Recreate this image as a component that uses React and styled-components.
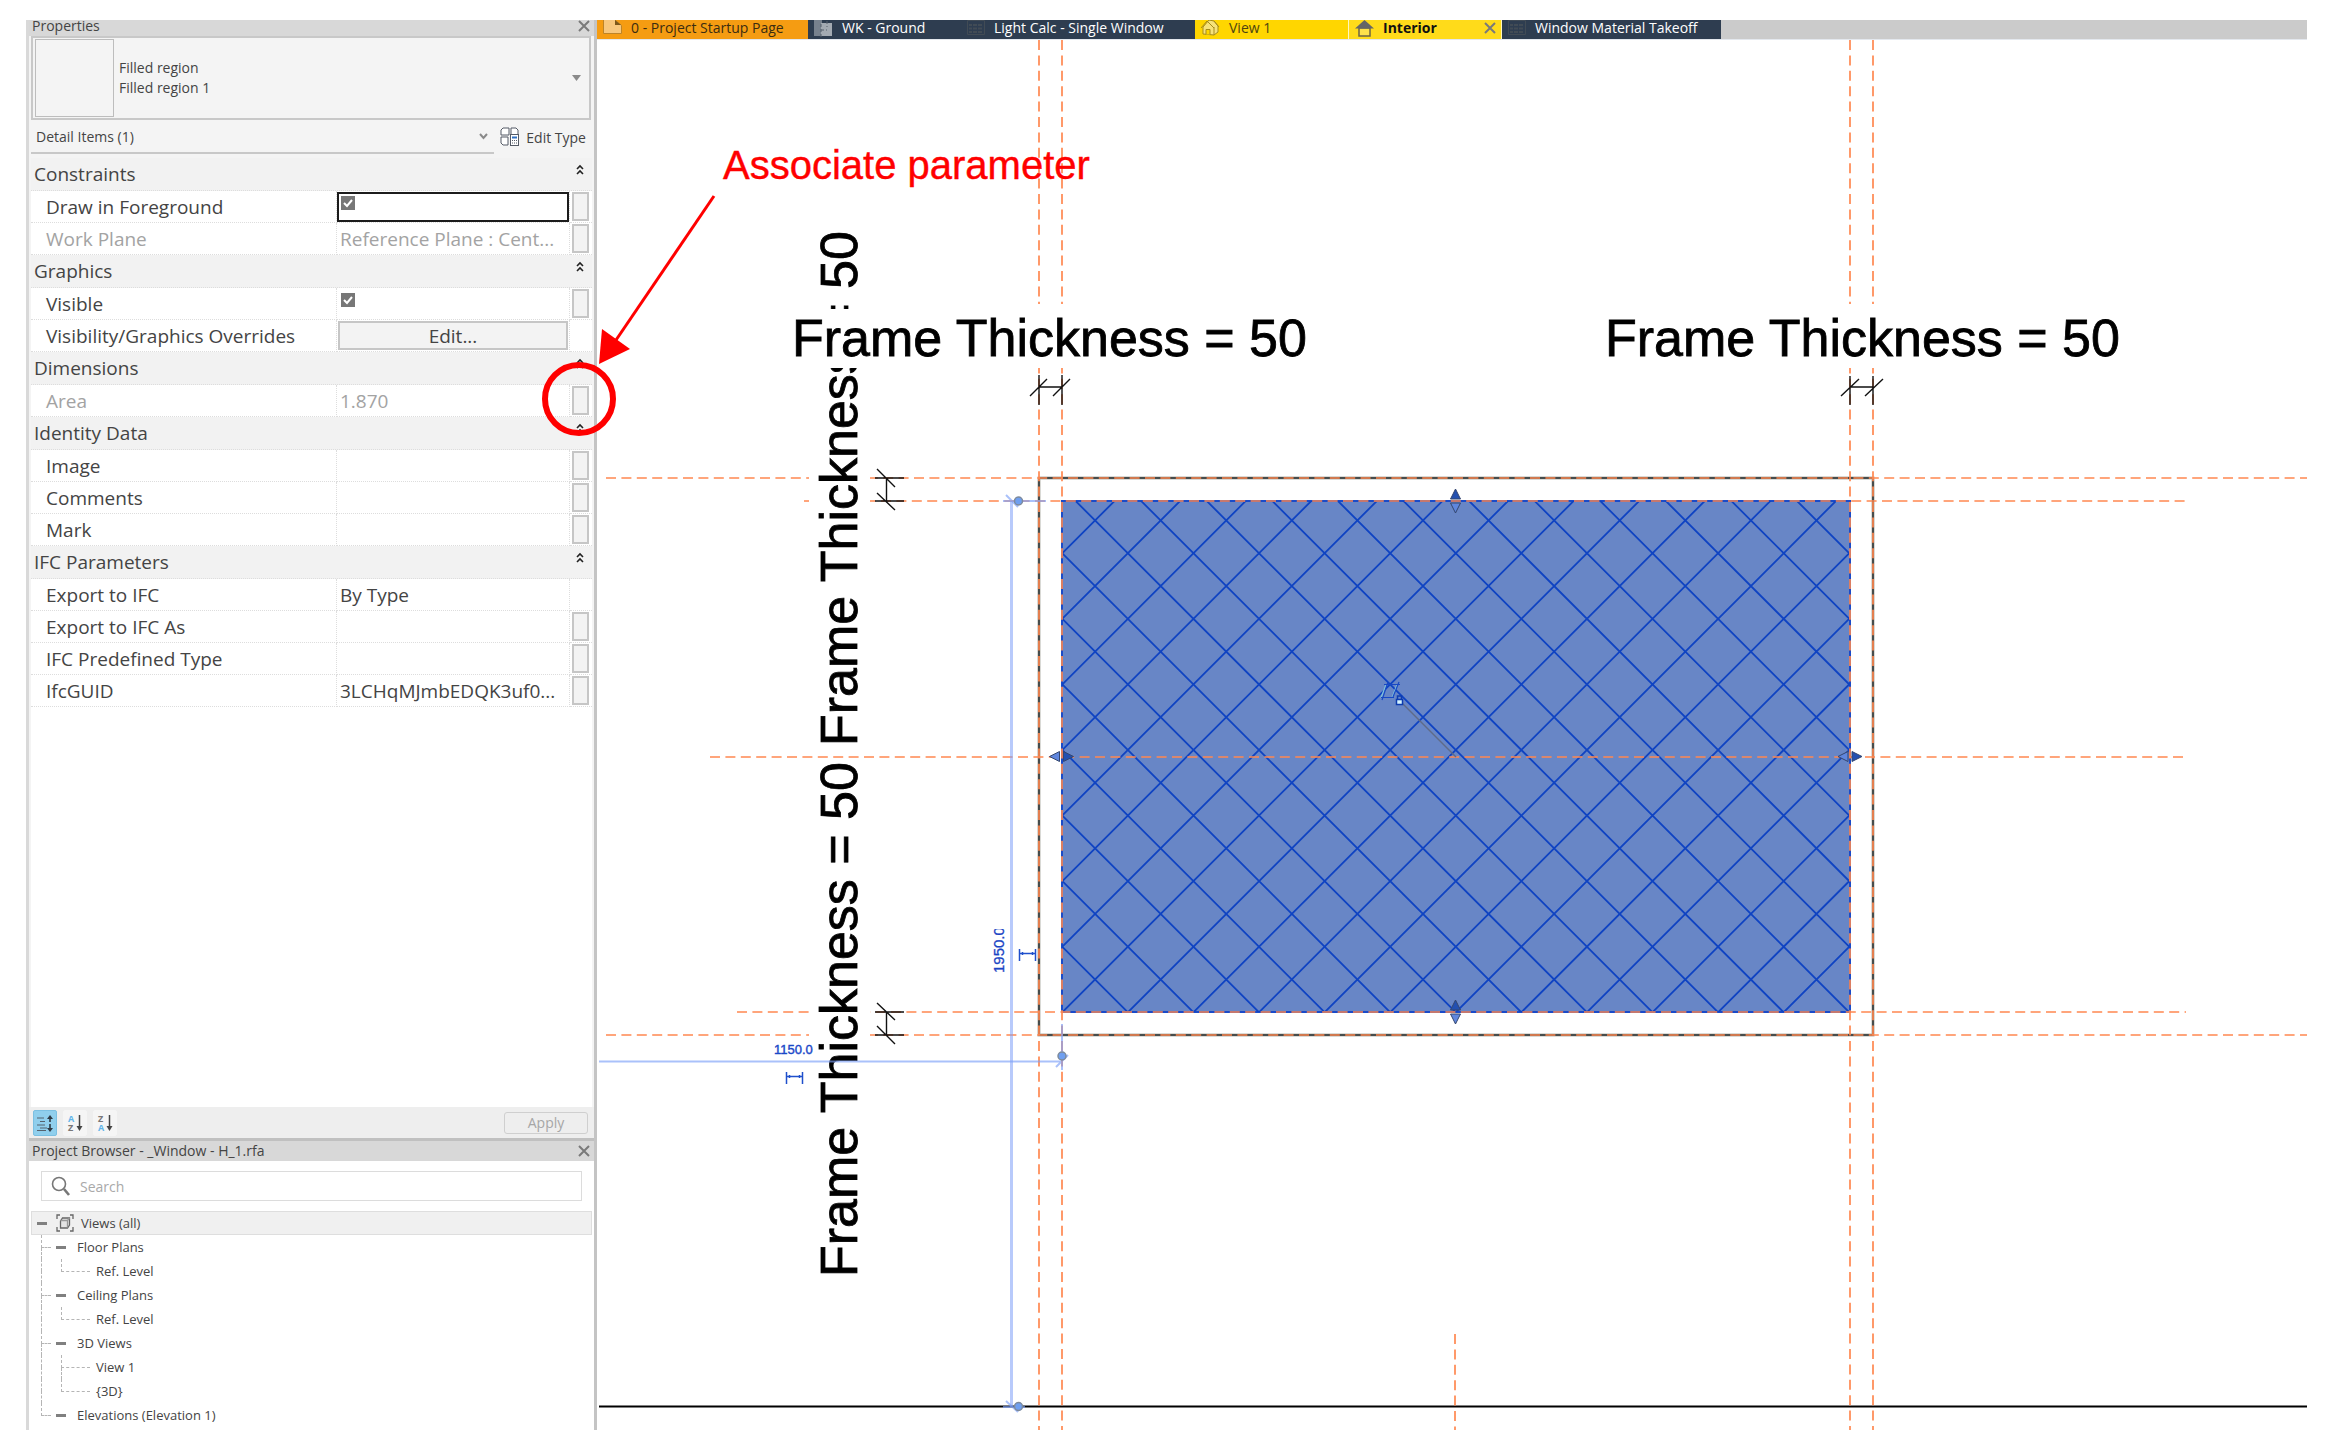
import React from "react";
import styled, { createGlobalStyle, css } from "styled-components";

const GlobalStyle = createGlobalStyle`
  *, *::before, *::after {
    box-sizing: border-box;
  }
  body {
    margin: 0;
    background: #ffffff;
    color: #444444;
    font-family: "Open Sans", "Noto Sans", sans-serif;
    font-size: 14px;
  }
  button, input, select {
    font-family: inherit;
    color: inherit;
  }
  button {
    cursor: pointer;
  }
`;

const Page = styled.div`
  position: relative;
  display: flex;
  min-height: 100vh;
  padding: 20px 40px 22px 26px;
`;

const Sidebar = styled.aside`
  flex: 0 0 571px;
  display: flex;
  flex-direction: column;
  border-left: 3px solid #d9d9d9;
  border-right: 3px solid #c4c4c4;
  background: #f4f4f4;
`;

const PanelTitle = styled.h2`
  display: flex;
  align-items: ${(props) => (props.$short ? "flex-start" : "center")};
  justify-content: space-between;
  height: ${(props) => (props.$short ? "16px" : "20px")};
  margin: 0;
  padding: 0 4px 0 3px;
  background: #d8d8d8;
  font-size: 14px;
  font-weight: 400;
  line-height: 12px;
`;

const CloseButton = styled.button`
  display: flex;
  padding: 0;
  border: 0;
  background: none;
`;

const TypeSelector = styled.button`
  display: flex;
  align-items: center;
  gap: 5px;
  height: 84px;
  margin: 0 3px 0 2px;
  padding: 1px 8px 1px 2px;
  border: 2px solid #c8c8c8;
  background: #f4f4f4;
  font-size: 14px;
  line-height: 20px;
  text-align: left;

  svg {
    margin-left: auto;
  }
`;

const Thumb = styled.span`
  width: 79px;
  height: 78px;
  border: 1px solid #bdbdbd;
`;

const FilterRow = styled.div`
  display: flex;
  align-items: flex-start;
  gap: 6px;
  height: 38px;
  padding: 0 8px 0 2px;
`;

const FilterBox = styled.div`
  display: flex;
  align-items: center;
  flex: 1;
  height: 34px;
  padding-right: 6px;
  border-bottom: 2px solid #c8c8c8;
`;

const FilterSelect = styled.select`
  flex: 1;
  appearance: none;
  padding: 0 5px;
  border: 0;
  background: none;
  font-size: 14px;
`;

const EditType = styled.button`
  display: flex;
  align-items: center;
  gap: 6px;
  height: 34px;
  padding: 0;
  border: 0;
  background: none;
  font-size: 14px;
`;

const GridArea = styled.div`
  flex: 1;
  margin: 0 2px;
  background: #ffffff;
`;

const PropertyTable = styled.table`
  width: 100%;
  table-layout: fixed;
  border-collapse: separate;
  border-spacing: 0;
  font-size: 19px;
  line-height: 24px;

  th, td {
    height: 32px;
    padding: 0;
    overflow: hidden;
    border-bottom: 1px dotted #dddddd;
    font-weight: 400;
    text-align: left;
    white-space: nowrap;
  }
`;

const LabelCol = styled.col`
  width: 306px;
`;

const ButtonCol = styled.col`
  width: 22px;
`;

const GroupCell = styled.th`
  && {
    height: 33px;
    background: #f2f2f2;
  }
`;

const GroupHead = styled.div`
  display: flex;
  align-items: center;
  justify-content: space-between;
  padding: 0 8px 0 3px;

  button {
    padding: 0 0 10px;
    border: 0;
    background: none;
    display: flex;
  }
`;

const LabelCell = styled.th`
  && {
    padding-left: 15px;
    border-right: 1px dotted #dddddd;
    color: ${(props) => (props.$muted ? "#a3a3a3" : "#444444")};
  }
`;

const ValueCell = styled.td`
  && {
    border-right: 1px dotted #dddddd;
    color: ${(props) => (props.$muted ? "#a3a3a3" : "#444444")};
  }
`;

const Value = styled.div`
  display: flex;
  align-items: center;
  height: 30px;
  padding: 0 3px;
  ${(props) =>
    props.$focused &&
    css`
      padding: 0 1px;
      border: 2px solid #1c1c1c;
    `}
`;

const Check = styled.input`
  appearance: none;
  width: 14px;
  height: 14px;
  margin: 0 0 8px 1px;
  background: #777777
    url("data:image/svg+xml,%3Csvg xmlns='http://www.w3.org/2000/svg' viewBox='0 0 14 14'%3E%3Cpath d='M3 7l3 3 5-6' fill='none' stroke='white' stroke-width='2'/%3E%3C/svg%3E");
`;

const EditButton = styled.button`
  width: 100%;
  height: 29px;
  margin: 0 -2px;
  flex: 1 0 auto;
  border: 2px solid #c6c6c6;
  background: #f3f3f3;
  font-size: 19px;
  line-height: 24px;
`;

const AssociateButton = styled.button`
  display: block;
  width: 17px;
  height: 29px;
  margin-left: 2px;
  padding: 0;
  border: 2px solid #c6c6c6;
  background: #f3f3f3;
`;

const SortBar = styled.div`
  display: flex;
  align-items: center;
  gap: 6px;
  height: 31px;
  padding: 0 6px 0 4px;
  background: #eeeeee;
`;

const SortButton = styled.button`
  display: flex;
  align-items: center;
  justify-content: center;
  width: 24px;
  height: 26px;
  padding: 0;
  border: 1px solid ${(props) => (props.$active ? "#7cc0e2" : "#f5f5f5")};
  border-radius: 2px;
  background: ${(props) => (props.$active ? "#90cfed" : "#f5f5f5")};
`;

const ApplyButton = styled.button`
  width: 84px;
  height: 22px;
  margin-left: auto;
  padding: 0;
  border: 1px solid #cfcfcf;
  border-radius: 3px;
  background: #eeeeee;
  color: #a6a6a6;
  font-size: 14px;
  line-height: 18px;
`;

const Divider = styled.div`
  height: 3px;
  background: #c0c0c0;
`;

const Browser = styled.section`
  background: #ffffff;
`;

const SearchBox = styled.label`
  display: flex;
  align-items: center;
  gap: 10px;
  height: 30px;
  margin: 10px 12px 10px 12px;
  padding: 0 9px;
  border: 1px solid #dcdcdc;
`;

const SearchInput = styled.input`
  flex: 1;
  padding: 0;
  border: 0;
  outline: 0;
  font-size: 14px;

  &::placeholder {
    color: #a9a9a9;
    opacity: 1;
  }
`;

const Tree = styled.ul`
  margin: 0 2px;
  padding: 0 0 3px;
  list-style: none;
  font-size: 13px;
  line-height: 18px;
`;

const TreeRow = styled.li`
  display: flex;
  align-items: center;
  height: 24px;
  padding-left: ${(props) => (props.$root ? "0" : "10px")};
  ${(props) =>
    props.$root &&
    css`
      gap: 7px;
      border: 1px solid #dedede;
      background: #f0f0f0;
    `}
`;

const Rail = styled.span`
  display: flex;
  flex-direction: column;
  width: ${(props) => props.$width}px;
  height: 24px;

  &::before, &::after {
    content: "";
    flex: 1;
    border-left: 1px dashed #b5b5b5;
  }
  &::before {
    border-bottom: ${(props) => (props.$branch ? "1px dashed #b5b5b5" : "0")};
  }
  &::after {
    border-left-color: ${(props) => (props.$last ? "transparent" : "#b5b5b5")};
  }
`;

const Toggle = styled.button`
  width: 10px;
  height: 3px;
  margin: 0 ${(props) => (props.$root ? "2px" : "11px")} 0 5px;
  padding: 0;
  border: 0;
  background: #808080;
`;

const LeafText = styled.span`
  padding-left: 6px;
`;

const Workspace = styled.main`
  flex: 1;
  min-width: 0;
  background: #ffffff;
`;

const TabBar = styled.nav`
  display: flex;
  height: 20px;
  background: #cbcbcb;
  border-bottom: 1px solid #e4e8ee;
`;

const tabColors = {
  orange: ["#f59c12", "#3c2c10"],
  navy: ["#2e3d50", "#ffffff"],
  gold: ["#ffd600", "#4d4410"],
  yellow: ["#ffdb1a", "#111111"],
};

const Tab = styled.div`
  display: flex;
  align-items: flex-start;
  flex: 0 1 ${(props) => props.$width}px;
  gap: 9px;
  padding: 0 5px 0 6px;
  background: ${(props) => tabColors[props.$tone][0]};
  border-right: ${(props) => (props.$edge ? "1px solid #fff6c0" : "0")};

  a {
    flex: 1;
    color: ${(props) => tabColors[props.$tone][1]};
    font-size: 14px;
    font-weight: ${(props) => (props.$active ? 700 : 400)};
    line-height: 16px;
    text-decoration: none;
    white-space: nowrap;
  }
  svg {
    flex: none;
  }
  button {
    padding-top: 2px;
  }
`;

const Drawing = styled.svg`
  display: block;
  width: 100%;
  height: auto;
  font-family: "Liberation Sans", Arial, sans-serif;
`;

const Markup = styled.svg`
  position: absolute;
  left: 526px;
  top: 140px;
  width: 590px;
  height: 310px;
  pointer-events: none;
  font-family: "Liberation Sans", Arial, sans-serif;
`;

const groups = [
  {
    name: "Constraints",
    rows: [
      { label: "Draw in Foreground", check: true, focused: true, link: true },
      { label: "Work Plane", value: "Reference Plane : Cent...", muted: true, link: true },
    ],
  },
  {
    name: "Graphics",
    rows: [
      { label: "Visible", check: true, link: true },
      { label: "Visibility/Graphics Overrides", edit: true },
    ],
  },
  {
    name: "Dimensions",
    rows: [{ label: "Area", value: "1.870", muted: true, link: true }],
  },
  {
    name: "Identity Data",
    rows: [
      { label: "Image", link: true },
      { label: "Comments", link: true },
      { label: "Mark", link: true },
    ],
  },
  {
    name: "IFC Parameters",
    rows: [
      { label: "Export to IFC", value: "By Type" },
      { label: "Export to IFC As", link: true },
      { label: "IFC Predefined Type", link: true },
      { label: "IfcGUID", value: "3LCHqMJmbEDQK3uf0...", link: true },
    ],
  },
];

const tree = [
  { name: "Floor Plans", views: ["Ref. Level"] },
  { name: "Ceiling Plans", views: ["Ref. Level"] },
  { name: "3D Views", views: ["View 1", "{3D}"] },
  { name: "Elevations (Elevation 1)", views: [] },
];

const tabs = [
  { name: "0 - Project Startup Page", tone: "orange", icon: "sheet", width: 211 },
  { name: "WK - Ground", tone: "navy", icon: "plan", width: 153 },
  { name: "Light Calc - Single Window", tone: "navy", icon: "table", width: 234 },
  { name: "View 1", tone: "gold", icon: "house", width: 154, edge: true },
  { name: "Interior", tone: "yellow", icon: "elevation", width: 153, active: true, edge: true },
  { name: "Window Material Takeoff", tone: "navy", icon: "table", width: 219 },
];

const CloseIcon = ({ size = 12 }) => (
  <svg width={size} height={size} viewBox="0 0 12 12">
    <path d="M1 1l10 10M11 1L1 11" stroke="#7a7a7a" strokeWidth="2" />
  </svg>
);

const CollapseIcon = () => (
  <svg width="8" height="11" viewBox="0 0 8 11">
    <path d="M1 5l3-3 3 3M1 10l3-3 3 3" fill="none" stroke="#222" strokeWidth="1.6" />
  </svg>
);

const EditTypeIcon = () => (
  <svg width="20" height="20" viewBox="0 0 20 20" fill="#fff" stroke="#555b66">
    <path d="M3 1h6v7H1V3zM11 1h5l2 2v5h-7zM1 10h7v8H3l-2-2z" />
    <rect x="10.5" y="7.5" width="8" height="11" />
    <path d="M12 10.5h5" stroke="#2f6fc0" strokeWidth="2" />
    <path d="M12 13.500h1m1 0h1m1 0h1M12 16h1m1 0h1m1 0h1" />
  </svg>
);

const SearchIcon = () => (
  <svg width="19" height="20" viewBox="0 0 19 20" fill="none" stroke="#777">
    <circle cx="8" cy="8" r="6.5" strokeWidth="1.6" />
    <path d="M13 13l5 6" strokeWidth="2.6" />
  </svg>
);

const ViewsIcon = () => (
  <svg width="18" height="18" viewBox="0 0 18 18" fill="none" stroke="#666" strokeWidth="1.3">
    <path d="M4 1H1v4M14 1h3v4M4 17H1v-4M14 17h3v-4" />
    <path d="M4.500 7l2-3h7v7l-2 3h-7z" fill="#e4e4e4" />
    <path d="M4.500 6.500h7v7M11.500 6.500l2-2.500" stroke="#999" />
  </svg>
);

const GroupSortIcon = () => (
  <svg width="16" height="18" viewBox="0 0 16 18">
    <path d="M0 4h7M3 7.500h5M0 11h8M3 14h7M0 16.500h9" stroke="#55626e" />
    <path d="M13 3v5M13 10v5" stroke="#2f3a44" strokeWidth="1.6" />
    <path d="M13 1l-3 4h6zM13 18l-3-4h6z" fill="#2f3a44" />
  </svg>
);

const AlphaSortIcon = ({ top, bottom }) => (
  <svg width="16" height="24" viewBox="0 0 16 24">
    <text x="1" y="11" fontSize="9" fontWeight="700" fill={top === "A" ? "#62b5ea" : "#777"}>
      {top}
    </text>
    <text x="1" y="20" fontSize="9" fontWeight="700" fill={bottom === "A" ? "#62b5ea" : "#777"}>
      {bottom}
    </text>
    <path d="M12.500 4v12" stroke="#444" strokeWidth="1.5" />
    <path d="M12.500 20l-3-5h6z" fill="#444" />
  </svg>
);

const TabIcon = ({ kind }) => {
  if (kind === "sheet") {
    return (
      <svg width="19" height="16" viewBox="0 2 19 16">
        <path d="M.5 1.500h11l7 6v8H.5z" fill="#f7c77d" stroke="#bd8428" />
        <path d="M12 2v5h6z" fill="#7c5718" />
      </svg>
    );
  }
  if (kind === "plan") {
    return (
      <svg width="19" height="18" viewBox="0 0 19 18">
        <path d="M0 0h8v16H0z" fill="#77818d" />
        <path d="M7 3h11v13H7z" fill="#a3aab2" />
        <path d="M7 4v13M13 1v6M7 10h6" stroke="#56606c" strokeDasharray="3 2" />
      </svg>
    );
  }
  if (kind === "table") {
    return (
      <svg width="18" height="16" viewBox="0 0 18 16" fill="none" stroke="#414b55">
        <path d="M.5 .5h17v14H.5z" />
        <path d="M2 5h3m1 0h4m1 0h4M2 8.500h3m1 0h4m1 0h4M2 12h3m1 0h4m1 0h4" strokeWidth="2" />
      </svg>
    );
  }
  if (kind === "house") {
    return (
      <svg width="19" height="18" viewBox="0 1 19 18" fill="#f6e27a" stroke="#a58c1c">
        <path d="M2 8v7l11 1 4-3V7l-4-5-5-1z" />
        <path d="M0 9l6-7 7 7M13 8v8M13 2l5 6" fill="none" />
        <path d="M5 15.500v-5h4v5" fill="#ffd600" />
      </svg>
    );
  }
  return (
    <svg width="19" height="18" viewBox="0 0 19 18">
      <path d="M4 8h11v8H4z" fill="#ffe24a" stroke="#6d6644" strokeWidth="1.5" />
      <path d="M9.500 0L19 8.500H0z" fill="#666" />
    </svg>
  );
};

const PropertyRow = ({ row }) => (
  <tr>
    <LabelCell scope="row" $muted={row.muted}>
      {row.label}
    </LabelCell>
    <ValueCell $muted={row.muted}>
      <Value $focused={row.focused}>
        {row.check && <Check type="checkbox" defaultChecked aria-label={row.label} />}
        {row.edit && <EditButton type="button">Edit...</EditButton>}
        {row.value}
      </Value>
    </ValueCell>
    <td>{row.link && <AssociateButton type="button" aria-label="Associate family parameter" />}</td>
  </tr>
);

const Properties = () => (
  <>
    <PanelTitle $short>
      Properties
      <CloseButton type="button" aria-label="Close">
        <CloseIcon />
      </CloseButton>
    </PanelTitle>
    <TypeSelector type="button">
      <Thumb />
      <span>
        Filled region
        <br />
        Filled region 1
      </span>
      <svg width="9" height="6" viewBox="0 0 9 6">
        <path d="M0 0h9L4.500 6z" fill="#8a8a8a" />
      </svg>
    </TypeSelector>
    <FilterRow>
      <FilterBox>
        <FilterSelect aria-label="Selection filter">
          <option>Detail Items (1)</option>
        </FilterSelect>
        <svg width="9" height="7" viewBox="0 0 9 7">
          <path d="M1 1l3.500 4L8 1" fill="none" stroke="#8a8a8a" strokeWidth="2" />
        </svg>
      </FilterBox>
      <EditType type="button">
        <EditTypeIcon />
        Edit Type
      </EditType>
    </FilterRow>
    <GridArea>
      <PropertyTable>
        <colgroup>
          <LabelCol />
          <col />
          <ButtonCol />
        </colgroup>
        {groups.map((group) => (
          <tbody key={group.name}>
            <tr>
              <GroupCell colSpan={3} scope="rowgroup">
                <GroupHead>
                  {group.name}
                  <button type="button" aria-label={`Collapse ${group.name}`}>
                    <CollapseIcon />
                  </button>
                </GroupHead>
              </GroupCell>
            </tr>
            {group.rows.map((row) => (
              <PropertyRow key={row.label} row={row} />
            ))}
          </tbody>
        ))}
      </PropertyTable>
    </GridArea>
    <SortBar>
      <SortButton type="button" $active aria-label="Sort by group">
        <GroupSortIcon />
      </SortButton>
      <SortButton type="button" aria-label="Sort ascending">
        <AlphaSortIcon top="A" bottom="Z" />
      </SortButton>
      <SortButton type="button" aria-label="Sort descending">
        <AlphaSortIcon top="Z" bottom="A" />
      </SortButton>
      <ApplyButton type="button">Apply</ApplyButton>
    </SortBar>
  </>
);

const ProjectBrowser = () => (
  <Browser>
    <PanelTitle>
      Project Browser - _Window - H_1.rfa
      <CloseButton type="button" aria-label="Close">
        <CloseIcon />
      </CloseButton>
    </PanelTitle>
    <SearchBox>
      <SearchIcon />
      <SearchInput type="text" placeholder="Search" aria-label="Search" />
    </SearchBox>
    <Tree>
      <TreeRow $root>
        <Toggle type="button" $root aria-label="Collapse Views" />
        <ViewsIcon />
        Views (all)
      </TreeRow>
      {tree.map((folder, i) => (
        <React.Fragment key={folder.name}>
          <TreeRow>
            <Rail $width={10} $branch $last={i === tree.length - 1} />
            <Toggle type="button" aria-label={`Collapse ${folder.name}`} />
            {folder.name}
          </TreeRow>
          {folder.views.map((view, j) => (
            <TreeRow key={view}>
              <Rail $width={20} />
              <Rail $width={29} $branch $last={j === folder.views.length - 1} />
              <LeafText>{view}</LeafText>
            </TreeRow>
          ))}
        </React.Fragment>
      ))}
    </Tree>
  </Browser>
);

const Tabs = () => (
  <TabBar>
    {tabs.map((tab) => (
      <Tab key={tab.name} $tone={tab.tone} $width={tab.width} $active={tab.active} $edge={tab.edge}>
        <TabIcon kind={tab.icon} />
        <a href="#view">{tab.name}</a>
        {tab.active && (
          <CloseButton type="button" aria-label="Close tab">
            <CloseIcon />
          </CloseButton>
        )}
      </Tab>
    ))}
  </TabBar>
);

// model geometry, in view units
const outer = { x1: 1039, x2: 1873, y1: 478, y2: 1035 };
const inner = { x1: 1062, x2: 1850, y1: 501, y2: 1012 };
const STEP = 65.58;

const hatch = [];
for (let i = -14; i <= 14; i++) {
  const cx = 1357.4 + i * STEP;
  hatch.push(`M${cx - 500} 151.6l1000 1000M${cx + 500} 151.6l-1000 1000`);
}

// each entry is x1, y1, x2, y2
const referencePlanes = [
  [1039, 40, 1039, 1430],
  [1062, 40, 1062, 1430],
  [1850, 40, 1850, 1430],
  [1873, 40, 1873, 1430],
  [606, 478, 2307, 478],
  [804, 501, 2186, 501],
  [710, 757, 2186, 757],
  [737, 1012, 2186, 1012],
  [606, 1035, 2307, 1035],
  [1455, 1334, 1455, 1430],
];

const Grip = ({ x, y, rotate = 0 }) => (
  <g transform={`translate(${x} ${y}) rotate(${rotate})`} stroke="#34466f">
    <path d="M0-12l5 10h-10z" fill="#2350b0" />
    <path d="M0 12l5-10h-10z" fill="#5f86dd" />
  </g>
);

const Dot = ({ x, y }) => <circle cx={x} cy={y} r="4" fill="#6f9ff0" stroke="#7d8a9c" strokeWidth="1.5" />;

const PermanentMark = ({ x, y }) => (
  <g transform={`translate(${x} ${y})`} stroke="#1f4fcc" strokeWidth="1.5">
    <path d="M0 0v12M16 0v12M0 4.500h16" />
    <path d="M3 3v3M13 3v3" />
  </g>
);

const FrameLabel = ({ x }) => (
  <>
    <rect x={x} y="309" width="514" height="59" fill="#fff" stroke="none" />
    <text x={x} y="356">
      Frame Thickness = 50
    </text>
  </>
);

const View = () => (
  <Drawing viewBox="597 40 1710 1390" role="img" aria-label="Interior elevation">
    <defs>
      <clipPath id="region">
        <rect x={inner.x1} y={inner.y1} width={inner.x2 - inner.x1} height={inner.y2 - inner.y1} />
      </clipPath>
      <clipPath id="heightValue">
        <rect x="985" y="929" width="24" height="60" />
      </clipPath>
    </defs>

    <rect
      x={inner.x1}
      y={inner.y1}
      width={inner.x2 - inner.x1}
      height={inner.y2 - inner.y1}
      fill="#6886c6"
      stroke="#1a4bc8"
      strokeWidth="2"
    />
    <path d={hatch.join("")} stroke="#0f43c2" strokeWidth="1.8" clipPath="url(#region)" />
    <rect
      x={outer.x1}
      y={outer.y1}
      width={outer.x2 - outer.x1}
      height={outer.y2 - outer.y1}
      fill="none"
      stroke="#b4b4ac"
      strokeWidth="3"
    />
    <rect
      x={outer.x1}
      y={outer.y1}
      width={outer.x2 - outer.x1}
      height={outer.y2 - outer.y1}
      fill="none"
      stroke="#2b3436"
      strokeWidth="1.6"
    />
    <path d="M599 1406.500h1708" stroke="#000" strokeWidth="2" />

    <g stroke="#ff8850" strokeWidth="1.7" strokeDasharray="10 5.4">
      {referencePlanes.map(([x1, y1, x2, y2]) => (
        <line key={`${x1}-${y1}`} x1={x1} y1={y1} x2={x2} y2={y2} />
      ))}
    </g>

    <g fill="#fff">
      <rect x="809" y="225" width="61" height="525" />
      <rect x="809" y="764" width="61" height="516" />
      <rect x="1030" y="304" width="40" height="64" />
      <rect x="1842" y="304" width="40" height="64" />
    </g>

    <g fontSize="52" fill="#000" stroke="#000" strokeWidth=".8">
      <text transform="translate(857 1277) rotate(-90)">Frame Thickness = 50</text>
      <text transform="translate(857 746) rotate(-90)">Frame Thickness = 50</text>
      <FrameLabel x={792} />
      <FrameLabel x={1605} />
    </g>

    <g stroke="#111" strokeWidth="1.4" fill="none">
      <path d="M1039 375v30M1062 375v30M1039 387h23M1030 396l17-17M1053 396l17-17" />
      <path d="M1850 376v29M1873 376v29M1850 387h23M1841 396l18-17M1865 396l18-17" />
      <path d="M875 478h29M875 501h29M886.500 478v23M877 469l18 18M877 493l18 17" />
      <path d="M875 1012h29M875 1035h29M886.500 1012v23M877 1003l18 17M877 1026l18 18" />
    </g>

    <g stroke="#7d9ff8" strokeOpacity=".65" strokeWidth="2" fill="none">
      <path d="M1011.500 501v906" strokeWidth="3" strokeOpacity=".55" />
      <path d="M599 1061.500h463M1062 1024v46M1056 1067l12-12" />
      <path d="M1003 501h43M1006 495l12 12M1003 1407h22M1006 1401l12 11" />
    </g>
    <Dot x={1018.5} y={501} />
    <Dot x={1018.5} y={1406.5} />
    <Dot x={1062} y={1056} />

    <text x="774" y="1054" fontSize="13" fill="#1a48c8" stroke="#1a48c8" strokeWidth=".4">
      1150.0
    </text>
    <g clipPath="url(#heightValue)">
      <text transform="translate(1004 973) rotate(-90)" fontSize="15" fill="#1a44c4" stroke="#1a44c4" strokeWidth=".3">
        1950.0
      </text>
    </g>
    <PermanentMark x={786.5} y={1072} />
    <PermanentMark x={1019.5} y={949} />

    <path d="M1401 702l55 55" stroke="#5f6b88" strokeWidth="1.5" />
    <path d="M1386 685l-5 13M1397 685l-5 13" stroke="#7fc0dc" strokeWidth="1.5" />
    <path d="M1384 684.500h16M1381 697.500h13M1388 682l-6 18M1399 682l-6 15" fill="none" stroke="#1848c4" strokeWidth="1.2" />
    <rect x="1396.5" y="699.5" width="6" height="5" fill="#d6f4ff" stroke="#0d3cb0" strokeWidth="1.5" />
    <path d="M1397.500 699v-3h4v3" fill="none" stroke="#0d3cb0" strokeWidth="1.5" />

    <Grip x={1455.5} y={501} />
    <Grip x={1455.5} y={1012} />
    <Grip x={1061.5} y={756.5} rotate={90} />
    <Grip x={1850} y={756.5} rotate={90} />
  </Drawing>
);

const App = () => {
  return (
    <>
      <GlobalStyle />
      <Page>
        <Sidebar>
          <Properties />
          <Divider />
          <ProjectBrowser />
        </Sidebar>
        <Workspace>
          <Tabs />
          <View />
        </Workspace>
        <Markup viewBox="526 140 590 310">
          <text x="723" y="179" fontSize="40" fill="#ff0000" stroke="#ff0000" strokeWidth=".4">
            Associate parameter
          </text>
          <path d="M714 196L614 343" stroke="#ff0000" strokeWidth="3" />
          <path d="M599 364l3-35 28 20z" fill="#ff0000" />
          <circle cx="579" cy="399" r="34" fill="none" stroke="#ff0000" strokeWidth="6" />
        </Markup>
      </Page>
    </>
  );
};

export default App;
